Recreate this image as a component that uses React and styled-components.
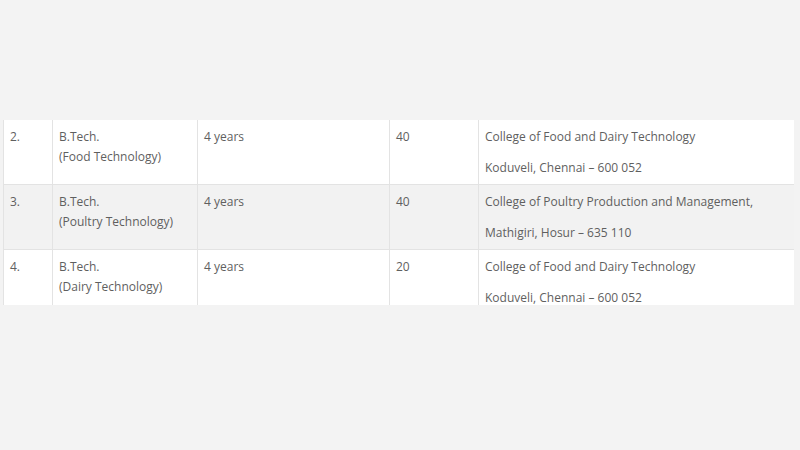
import React from "react";
import styled, { createGlobalStyle } from "styled-components";

const Global = createGlobalStyle`
  html, body { margin: 0; padding: 0; background: #f3f3f3; }
  body { font-family: "Open Sans", "Liberation Sans", sans-serif; }
`;

const Page = styled.div`
  width: 800px;
  height: 450px;
  padding: 120px 0 0 3px;
  box-sizing: border-box;
  background: #f3f3f3;
`;

const Viewport = styled.div`
  width: 791px;
  height: 185px;
  overflow: hidden;
`;

const Table = styled.table`
  border-collapse: collapse;
  table-layout: fixed;
  width: 791px;
  font-size: 12px;
  line-height: 20px;
  color: #5f5f5f;
`;

const Row = styled.tr`
  background: ${(p) => (p.$alt ? "#f2f2f2" : "#ffffff")};
`;

const Cell = styled.td`
  border: 1px solid #e3e3e3;
  border-top: ${(p) => (p.$first ? "none" : "1px solid #e3e3e3")};
  padding: 7px 6px 6px 6px;
  vertical-align: top;
`;

const Para = styled.p`
  margin: 0 0 11px 0;
  &:last-child { margin-bottom: 0; }
`;

const rows = [
  { no: "2.", course: "(Food Technology)", years: "4 years", seats: "40", college: "College of Food and Dairy Technology", addr: "Koduveli, Chennai – 600 052" },
  { no: "3.", course: "(Poultry Technology)", years: "4 years", seats: "40", college: "College of Poultry Production and Management,", addr: "Mathigiri, Hosur – 635 110" },
  { no: "4.", course: "(Dairy Technology)", years: "4 years", seats: "20", college: "College of Food and Dairy Technology", addr: "Koduveli, Chennai – 600 052" },
];

export default function App() {
  return (
    <>
      <Global />
      <Page>
        <Viewport>
          <Table>
            <colgroup>
              <col style={{ width: 49 }} />
              <col style={{ width: 145 }} />
              <col style={{ width: 192 }} />
              <col style={{ width: 89 }} />
              <col style={{ width: 316 }} />
            </colgroup>
            <tbody>
              {rows.map((r, i) => (
                <Row key={r.no} $alt={i % 2 === 1}>
                  <Cell $first={i === 0}>{r.no}</Cell>
                  <Cell $first={i === 0}>B.Tech.<br />{r.course}</Cell>
                  <Cell $first={i === 0}>{r.years}</Cell>
                  <Cell $first={i === 0}>{r.seats}</Cell>
                  <Cell $first={i === 0}>
                    <Para>{r.college}</Para>
                    <Para>{r.addr}</Para>
                  </Cell>
                </Row>
              ))}
            </tbody>
          </Table>
        </Viewport>
      </Page>
    </>
  );
}
